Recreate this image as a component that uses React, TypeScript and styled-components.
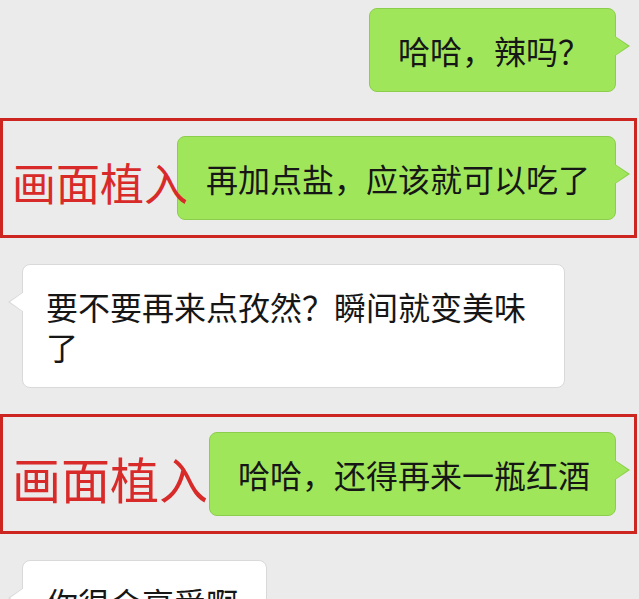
import React from 'react';
import styled, { createGlobalStyle, css } from 'styled-components';

type Side = 'left' | 'right';

type Message =
  | { id: number; side: Side; text: string }
  | { id: number; side: Side; text: string; tag: string; tagSize: number };

const messages: Message[] = [
  { id: 1, side: 'right', text: '哈哈，辣吗？' },
  { id: 2, side: 'right', text: '再加点盐，应该就可以吃了', tag: '画面植入', tagSize: 44 },
  { id: 3, side: 'left', text: '要不要再来点孜然？瞬间就变美味了' },
  { id: 4, side: 'right', text: '哈哈，还得再来一瓶红酒', tag: '画面植入', tagSize: 49 },
  { id: 5, side: 'left', text: '你很会享受啊' },
];

const GlobalStyle = createGlobalStyle`
  html, body {
    margin: 0;
    padding: 0;
    background: #ebebeb;
    overflow: hidden;
  }
  body {
    font-family: "Noto Sans CJK SC", "Noto Sans", sans-serif;
  }
`;

const Thread = styled.div`
  display: flex;
  flex-direction: column;
  gap: 26px;
  padding-top: 8px;
  width: 639px;
`;

const Row = styled.div<{ $side: Side }>`
  display: flex;
  justify-content: ${(p) => (p.$side === 'right' ? 'flex-end' : 'flex-start')};
  padding: 0 23px 0 22px;
`;

const Highlight = styled.div`
  display: flex;
  align-items: center;
  border: 3px solid #cd2520;
  margin-right: 2px;
  padding: 15px 18px 15px 9px;
`;

const Tag = styled.span<{ $size: number }>`
  position: relative;
  z-index: 1;
  flex-shrink: 0;
  margin-right: -12px;
  margin-top: 8px;
  color: #d92a2a;
  font-size: ${(p) => p.$size}px;
  line-height: 1.2;
  white-space: nowrap;
`;

const tail = (side: Side, fill: string, edge: string) => css`
  &::before,
  &::after {
    content: '';
    position: absolute;
    top: 27px;
    width: 0;
    height: 0;
    border-top: 10px solid transparent;
    border-bottom: 10px solid transparent;
  }
  &::before {
    ${side === 'right'
      ? css`right: -15px; border-left: 15px solid ${edge};`
      : css`left: -15px; border-right: 15px solid ${edge};`}
  }
  &::after {
    ${side === 'right'
      ? css`right: -13px; border-left: 14px solid ${fill};`
      : css`left: -13px; border-right: 14px solid ${fill};`}
  }
`;

const Bubble = styled.div<{ $side: Side }>`
  position: relative;
  box-sizing: border-box;
  flex-shrink: 0;
  max-width: 543px;
  border-radius: 8px;
  font-size: 32px;
  line-height: 40px;
  color: #161616;
  ${(p) =>
    p.$side === 'right'
      ? css`
          margin-left: auto;
          padding: 21px 25px 21px 28px;
          background: #a0e65b;
          border: 1px solid #8cce4c;
          ${tail('right', '#a0e65b', '#8cce4c')}
        `
      : css`
          padding: 21px 28px 21px 23px;
          background: #ffffff;
          border: 1px solid #d9d9d9;
          ${tail('left', '#ffffff', '#d9d9d9')}
        `}
`;

const App = () => {
  return (
    <>
      <GlobalStyle />
      <Thread>
        {messages.map((m) =>
          'tag' in m ? (
            <Highlight key={m.id}>
              <Tag $size={m.tagSize}>{m.tag}</Tag>
              <Bubble $side={m.side}>{m.text}</Bubble>
            </Highlight>
          ) : (
            <Row key={m.id} $side={m.side}>
              <Bubble $side={m.side}>{m.text}</Bubble>
            </Row>
          )
        )}
      </Thread>
    </>
  );
};

export default App;
